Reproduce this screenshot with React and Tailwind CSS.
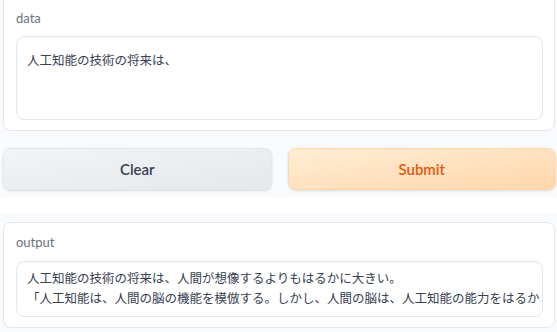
import React from 'react';

const font = { fontFamily: 'Lato, "Noto Sans CJK JP", "Noto Sans", sans-serif' };

const App = () => {
  return (
    <div className="w-[557px] h-[332px] overflow-hidden bg-white" style={font}>
      {/* Input column */}
      <div className="bg-[#f9fafb] pl-[3px] pr-[1px] pb-[7px]">
        <div className="mr-[1px] bg-white border border-t-0 border-[#e5e7eb] rounded-b-lg pl-[12px] pr-[11px] pt-[9px] pb-[10px]">
          <div className="text-[13px] leading-[18px] text-[#6b7280] mb-[9px]">data</div>
          <div className="h-[84px] rounded-lg border border-[#e5e7eb] shadow-[inset_0_1px_2px_rgba(0,0,0,0.04)] px-[10px] pt-[14px] text-[12.5px] leading-[20px] text-[#374151]">
            人工知能の技術の将来は、
          </div>
        </div>
        <div className="flex gap-[16px] mt-[17px]">
          <button className="flex-1 h-[42px] rounded-lg border border-[#e5e7eb] bg-gradient-to-br from-[#f3f4f6] to-[#e5e7eb] text-[15px] font-semibold text-[#374151] shadow-sm">
            Clear
          </button>
          <button className="flex-1 h-[42px] rounded-lg border border-[#fed7aa] bg-gradient-to-br from-[#ffedd5] to-[#fed7aa] text-[15px] font-semibold text-[#ea580c] shadow-sm">
            Submit
          </button>
        </div>
      </div>

      <div className="h-[16px] bg-white" />

      {/* Output column */}
      <div className="bg-[#f9fafb] pl-[3px] pr-[2px] pt-[9px] h-[200px]">
        <div className="bg-white border border-[#e5e7eb] rounded-lg pl-[12px] pr-[11px] pt-[10px] pb-[10px]">
          <div className="text-[13px] leading-[18px] text-[#6b7280] mb-[10px]">output</div>
          <div className="rounded-lg border border-[#e5e7eb] shadow-[inset_0_1px_2px_rgba(0,0,0,0.04)] px-[10px] py-[7px] text-[12.5px] leading-[20px] text-[#374151] whitespace-nowrap overflow-hidden">
            <div>人工知能の技術の将来は、人間が想像するよりもはるかに大きい。</div>
            <div>「人工知能は、人間の脳の機能を模倣する。しかし、人間の脳は、人工知能の能力をはるか</div>
          </div>
        </div>
      </div>
    </div>
  );
};

export default App;
